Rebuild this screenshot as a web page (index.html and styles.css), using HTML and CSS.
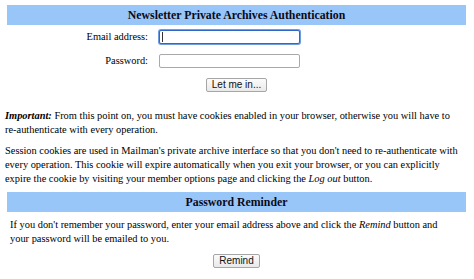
FILE: index.html
```html
<!DOCTYPE html>
<html>
<head>
<meta charset="utf-8">
<title>Newsletter Private Archives Authentication</title>
<link rel="stylesheet" href="styles.css">
</head>
<body>
<form class="page">
  <div class="bar bar-top">Newsletter Private Archives Authentication</div>
  <div class="login">
    <label class="lbl" for="u">Email address:</label>
    <div class="field"><input id="u" class="inp inp-focus" type="text"><span class="caret"></span></div>
    <label class="lbl" for="p">Password:</label>
    <div class="field"><input id="p" class="inp" type="password"></div>
  </div>
  <div class="btnrow"><button type="button" class="btn">Let me in...</button></div>
  <p class="para p1"><strong><em>Important:</em></strong> From this point on, you must have cookies enabled in your browser, otherwise you will have to re-authenticate with every operation.</p>
  <p class="para p2">Session cookies are used in Mailman's private archive interface so that you don't need to re-authenticate with every operation. This cookie will expire automatically when you exit your browser, or you can explicitly expire the cookie by visiting your member options page and clicking the <em>Log out</em> button.</p>
  <div class="bar bar-rem">Password Reminder</div>
  <p class="para p3">If you don't remember your password, enter your email address above and click the <em>Remind</em> button and your password will be emailed to you.</p>
  <div class="btnrow btnrow-rem"><button type="button" class="btn">Remind</button></div>
</form>
</body>
</html>
```

FILE: styles.css
```css
html, body {
  margin: 0;
  padding: 0;
  background: #ffffff;
}
body {
  font-family: "Liberation Serif", "Times New Roman", serif;
  font-size: 10.4px;
  line-height: 14px;
  color: #000;
}
.page {
  padding: 5px 8px 0 7px;
  margin: 0;
}
.bar {
  background: #99c6f8;
  height: 20px;
  line-height: 20px;
  text-align: center;
  font-weight: bold;
  font-size: 11.8px;
  color: #0a0a1a;
}
.login {
  display: grid;
  grid-template-columns: 141px 141px;
  column-gap: 11px;
  row-gap: 10px;
  align-items: center;
  margin-top: 5px;
}
.lbl {
  text-align: right;
}
.field {
  position: relative;
  height: 14px;
}
.inp {
  box-sizing: border-box;
  width: 141px;
  height: 14px;
  margin: 0;
  padding: 0 2px;
  border: 1px solid #a9a9a9;
  border-radius: 2px;
  background: #fff;
  display: block;
  outline: none;
}
.inp-focus {
  border: 1px solid #2f68c8;
  box-shadow: 0 0 0 1px #6f9be0;
}
.caret {
  position: absolute;
  left: 3px;
  top: 2px;
  width: 1px;
  height: 10px;
  background: #333;
}
.btnrow {
  display: flex;
  justify-content: center;
  margin-top: 10px;
}
.btn {
  box-sizing: border-box;
  height: 14px;
  margin: 0;
  padding: 0 5px;
  font-family: "Liberation Sans", Arial, sans-serif;
  font-size: 10px;
  line-height: 12px;
  color: #111;
  background: linear-gradient(#fbfbfb, #e9e9e9);
  border: 1px solid #a6a6a6;
  border-radius: 2px;
}
.para {
  margin: 0;
  margin-left: -2px;
  padding-right: 6px;
}
.p1 { margin-top: 17px; }
.p2 { margin-top: 7px; }
.bar-rem { margin-top: 6px; }
.p3 {
  margin-top: 6px;
  padding-left: 5px;
  padding-right: 10px;
}
.btnrow-rem { margin-top: 8px; }
```
